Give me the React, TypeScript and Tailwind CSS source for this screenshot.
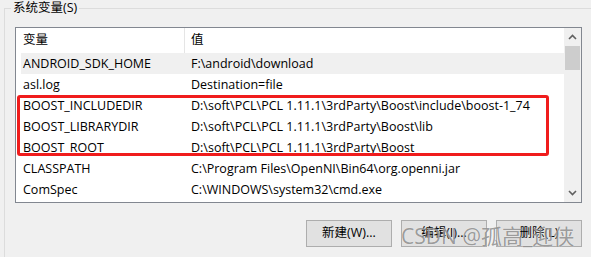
import React from "react";

const rows: [string, string][] = [
  ["ANDROID_SDK_HOME", "F:\\android\\download"],
  ["asl.log", "Destination=file"],
  ["BOOST_INCLUDEDIR", "D:\\soft\\PCL\\PCL 1.11.1\\3rdParty\\Boost\\include\\boost-1_74"],
  ["BOOST_LIBRARYDIR", "D:\\soft\\PCL\\PCL 1.11.1\\3rdParty\\Boost\\lib"],
  ["BOOST_ROOT", "D:\\soft\\PCL\\PCL 1.11.1\\3rdParty\\Boost"],
  ["CLASSPATH", "C:\\Program Files\\OpenNI\\Bin64\\org.openni.jar"],
  ["ComSpec", "C:\\WINDOWS\\system32\\cmd.exe"],
];

export default function App() {
  return (
    <div
      className="relative w-[591px] h-[257px] overflow-hidden bg-[#f0f0f0] text-[12.5px] text-black"
      style={{ fontFamily: '"Open Sans", "Noto Sans CJK SC", sans-serif' }}
    >
      <div className="pt-[8px] pl-[4px]">
        <div className="relative w-[600px] h-[260px] border-l border-t border-[#dcdcdc]">
          <span className="absolute -top-[10px] left-[6px] bg-[#f0f0f0] px-[2px] leading-[18px]">
            系统变量(S)
          </span>
          <div className="ml-[10px] mt-[18px] flex w-[567px] h-[176px] border border-[#828790] bg-white">
            <div className="flex-1 flex flex-col">
              <div className="flex h-[25px] items-center">
                <div className="w-[168px] pl-[7px]">变量</div>
                <div className="w-px h-full bg-[#e5e5e5]" />
                <div className="pl-[6px]">值</div>
              </div>
              {rows.map(([k, v], i) => (
                <div
                  key={k}
                  className={`ml-[5px] flex h-[21px] items-center pt-px ${i === 0 ? "bg-[#f0f0f0]" : ""}`}
                >
                  <div className="w-[163px] pl-[2px] whitespace-nowrap">{k}</div>
                  <div className="pl-[7px] whitespace-nowrap">{v}</div>
                </div>
              ))}
            </div>
            <div className="w-[17px] bg-[#f0f0f0] flex flex-col items-center">
              <div className="h-[18px] flex items-center justify-center">
                <svg width="9" height="6" viewBox="0 0 9 6">
                  <path d="M1 5 L4.5 1.5 L8 5" stroke="#606060" strokeWidth="1.6" fill="none" />
                </svg>
              </div>
              <div className="w-[15px] h-[24px] bg-[#cdcdcd]" />
              <div className="flex-1" />
              <div className="h-[18px] flex items-center justify-center">
                <svg width="9" height="6" viewBox="0 0 9 6">
                  <path d="M1 1 L4.5 4.5 L8 1" stroke="#606060" strokeWidth="1.6" fill="none" />
                </svg>
              </div>
            </div>
          </div>
          <div className="mt-[17px] w-[577px] flex justify-end gap-[9px]">
            <button className="w-[86px] h-[27px] bg-[#e1e1e1] border border-[#adadad]">新建(W)...</button>
            <button className="w-[86px] h-[27px] bg-[#e1e1e1] border border-[#adadad]">编辑(I)...</button>
            <button className="w-[86px] h-[27px] bg-[#e1e1e1] border border-[#adadad]">删除(L)</button>
          </div>
        </div>
      </div>
      <div className="absolute left-[17px] top-[95px] w-[532px] h-[61px] border-[3px] border-[#f01c1c] rounded-[3px]" />
      <div
        className="absolute left-[401px] top-[221px] text-[21px] leading-[30px] text-[rgba(95,95,95,0.62)] whitespace-nowrap"
        style={{ textShadow: "0 0 1px rgba(255,255,255,0.8)" }}
      >
        CSDN @孤高_迎侠
      </div>
    </div>
  );
}
